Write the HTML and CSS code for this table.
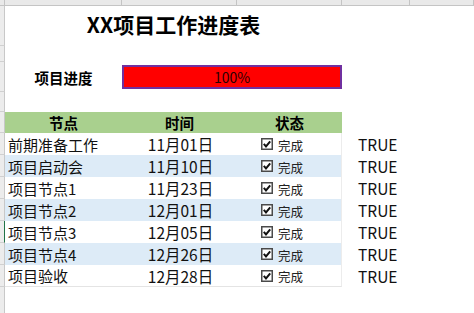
FILE: index.html
```html
<!DOCTYPE html>
<html lang="zh-CN">
<head>
  <meta charset="UTF-8">
  <title>XX项目工作进度表</title>
  <link rel="stylesheet" href="styles.css">
</head>
<body>
  <div class="sheet">
    <!-- column header strip -->
    <div class="col-head">
      <div class="corner"></div>
      <div class="ch ca"></div>
      <div class="ch cb"></div>
      <div class="ch cc"></div>
      <div class="ch cd"></div>
      <div class="ch ce"></div>
    </div>

    <div class="row title-row">
      <div class="rh"></div>
      <div class="cell span3 title">XX项目工作进度表</div>
    </div>

    <div class="row gap-row"><div class="rh"></div></div>

    <div class="row progress-row">
      <div class="rh"></div>
      <div class="cell ca label">项目进度</div>
      <div class="cell span2">
        <div class="bar">100%</div>
      </div>
    </div>

    <div class="row gap2-row"><div class="rh"></div></div>

    <div class="row head-row">
      <div class="rh"></div>
      <div class="cell ca th">节点</div>
      <div class="cell cb th">时间</div>
      <div class="cell cc th">状态</div>
    </div>

    <div id="rows"></div>

    <div class="row tail-row"><div class="rh"></div></div>
  </div>

  <script>
    var tasks = [
      ['前期准备工作', '11月01日'],
      ['项目启动会', '11月10日'],
      ['项目节点1', '11月23日'],
      ['项目节点2', '12月01日'],
      ['项目节点3', '12月05日'],
      ['项目节点4', '12月26日'],
      ['项目验收', '12月28日']
    ];

    var check = '<svg class="box" width="12" height="12" viewBox="0 0 12 12">' +
      '<rect x="0.75" y="0.75" width="10.5" height="10.5" fill="#fff" stroke="#4a4a4a" stroke-width="1.5"/>' +
      '<path d="M2.8 5.8 L5 8.4 L9.2 3.4" fill="none" stroke="#111" stroke-width="2"/></svg>';

    var html = '';
    tasks.forEach(function (t, i) {
      var cls = 'row data-row' + (i % 2 ? ' band' : '') + (i === 4 ? ' active' : '');
      html += '<div class="' + cls + '">' +
        '<div class="rh"></div>' +
        '<div class="cell ca name">' + t[0] + '</div>' +
        '<div class="cell cb date">' + t[1] + '</div>' +
        '<div class="cell cc state">' + check + '<span>完成</span></div>' +
        '<div class="cell cd flag">TRUE</div>' +
        '</div>';
    });
    document.getElementById('rows').innerHTML = html;
  </script>
</body>
</html>
```

FILE: styles.css
```css
body {
  margin: 0;
  background: #fff;
  font-family: "Noto Sans CJK SC", sans-serif;
  color: #111;
}

.sheet {
  width: 474px;
  height: 313px;
  overflow: hidden;
}

/* column header strip */
.col-head {
  display: flex;
  height: 5px;
  background: #e9e9e9;
  border-bottom: 1px solid #c4c4c4;
}

.corner {
  width: 5px;
  flex: none;
  border-right: 1px solid #c4c4c4;
  box-sizing: border-box;
}

.ch {
  box-sizing: border-box;
  border-right: 1px solid #c4c4c4;
}

.ca { width: 117px; flex: none; }
.cb { width: 115px; flex: none; }
.cc { width: 105px; flex: none; }
.cd { width: 68px; flex: none; }
.ce { flex: 1; }
.span2 { width: 220px; flex: none; }
.span3 { width: 337px; flex: none; }

/* rows */
.row {
  display: flex;
}

.rh {
  width: 5px;
  flex: none;
  box-sizing: border-box;
  background: #ececec;
  border-right: 1px solid #c8c8c8;
  border-bottom: 1px solid #d0d0d0;
}

.cell {
  box-sizing: border-box;
  display: flex;
  align-items: center;
}

.title-row { height: 40px; }
.gap-row { height: 16px; }
.progress-row { height: 30px; }
.gap2-row { height: 20px; }
.head-row { height: 21px; }
.data-row { height: 22px; }
.tail-row { height: 40px; }

.title {
  justify-content: center;
  font-size: 21px;
  font-weight: bold;
  color: #000;
  padding-bottom: 4px;
}

.label {
  justify-content: center;
  font-size: 14.5px;
  font-weight: bold;
  color: #000;
}

.bar {
  width: 100%;
  height: 24px;
  margin-top: 3px;
  box-sizing: border-box;
  background: #ff0000;
  border: 2px solid #7030a0;
  font-size: 14px;
  line-height: 20px;
  text-align: center;
  color: #2a0000;
}

.progress-row .span2 {
  align-items: flex-start;
}

/* task table */
.th {
  justify-content: center;
  background: #a9d08e;
  font-size: 14.5px;
  font-weight: bold;
  color: #000;
}

.data-row .ca,
.data-row .cb,
.data-row .cc {
  background: #fff;
}

.data-row.band .ca,
.data-row.band .cb,
.data-row.band .cc {
  background: #ddebf7;
}

.data-row:last-child .ca,
.data-row:last-child .cb,
.data-row:last-child .cc {
  border-bottom: 1px solid #e4e4e4;
}

.data-row .cc {
  border-right: 1px solid #ececec;
}

.data-row.active .rh {
  border-right: 1px solid #217346;
}

.name {
  padding-left: 3px;
  font-size: 15px;
}

.date {
  justify-content: center;
  font-size: 15.5px;
  padding-left: 2px;
}

.state {
  padding-left: 24px;
  gap: 5px;
  font-size: 12.5px;
  color: #222;
}

.state span {
  padding-top: 2px;
}

.flag {
  padding-left: 16px;
  font-size: 15.5px;
}
```
